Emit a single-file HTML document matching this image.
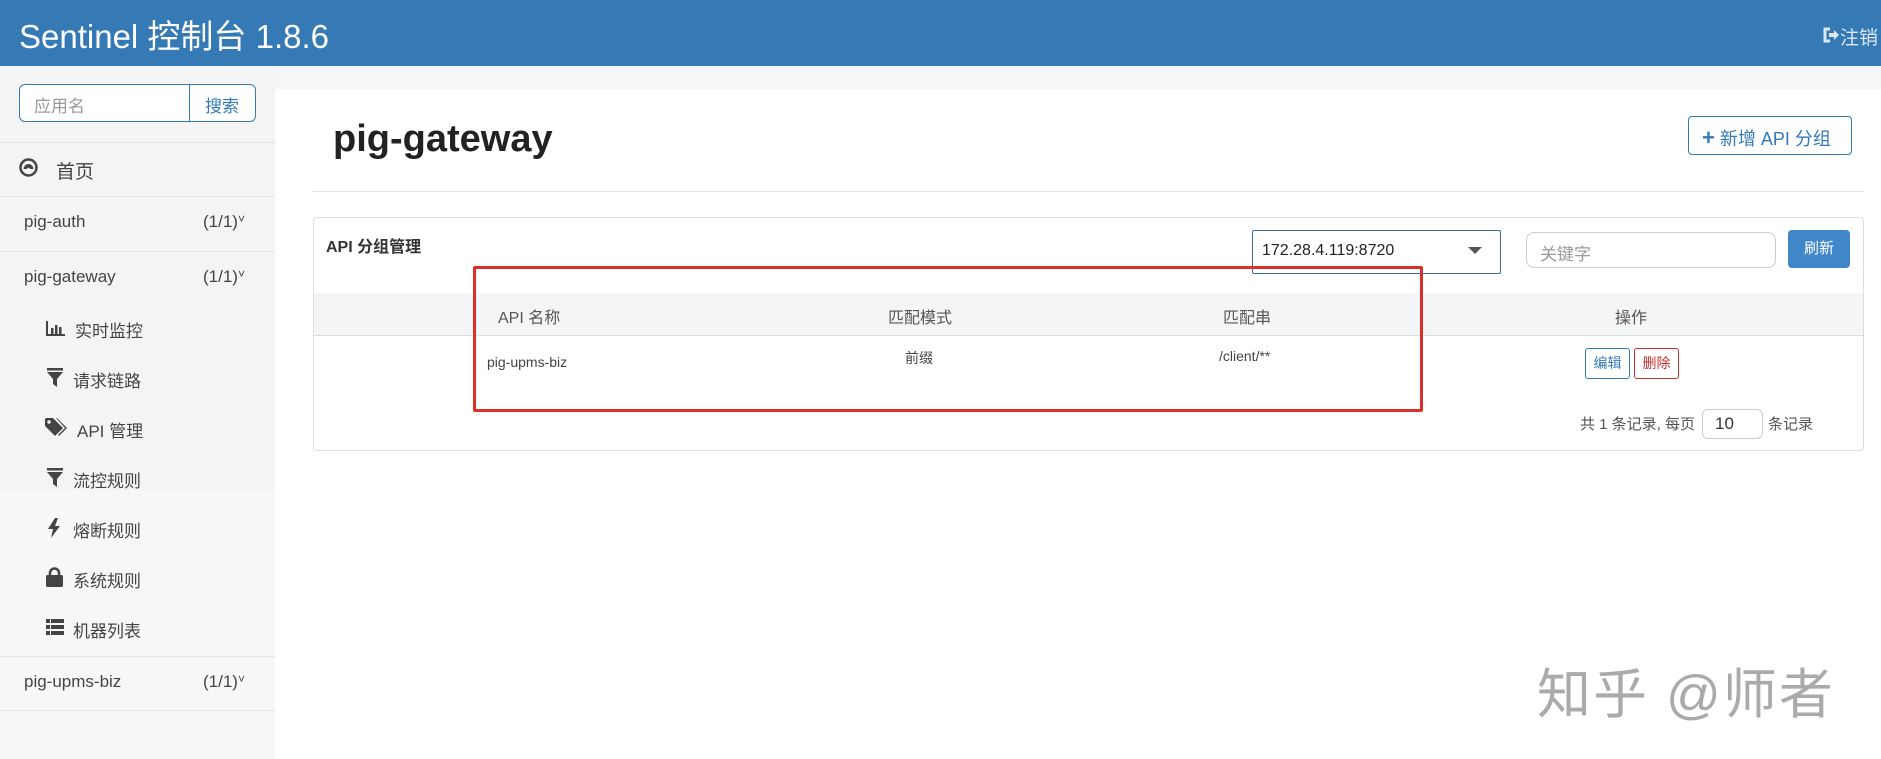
<!DOCTYPE html>
<html><head><meta charset="utf-8">
<style>
*{box-sizing:border-box;margin:0;padding:0}
body{width:1881px;height:759px;overflow:hidden;background:#f5f6f6;font-family:"Liberation Sans","Noto Sans CJK SC",sans-serif;color:#333;position:relative}
.a{position:absolute;white-space:nowrap}
#hdr{left:0;top:0;width:1881px;height:66px;background:#3579b5}
#side{left:0;top:66px;width:275px;height:693px;background:#f4f4f4}
#sidel{left:0;top:490px;width:275px;height:269px;background:#f7f7f7}
#main{left:275px;top:89px;width:1606px;height:670px;background:#fff}
.hl{height:1px;background:#e4e4e4;left:0;width:275px}
.si{font-size:17px;color:#444}
.sub{font-size:17px;color:#444}
.ic{fill:#444}
</style></head><body>
<div class="a" id="hdr"></div>
<div class="a" style="left:19px;top:10px;font-size:33px;color:#fff">Sentinel 控制台 1.8.6</div>
<svg class="a" style="left:1822px;top:27px" width="17" height="16" viewBox="0 0 17 16"><path d="M8 2H3v12h5" fill="none" stroke="#dce8f4" stroke-width="3"/><path d="M7 6h5V3l5 5-5 5v-3H7z" fill="#dce8f4"/></svg>
<div class="a" style="left:1840px;top:23px;font-size:19px;color:#dce8f4">注销</div>

<div class="a" id="side"></div>
<div class="a" id="sidel"></div>
<div class="a" style="left:19px;top:84px;width:237px;height:38px;border:1px solid #3579b5;border-radius:6px;background:#fff"></div>
<div class="a" style="left:189px;top:84px;width:1px;height:38px;background:#3579b5"></div>
<div class="a" style="left:34px;top:92px;font-size:17px;color:#999">应用名</div>
<div class="a" style="left:205px;top:92px;font-size:17px;color:#3579b5">搜索</div>
<div class="a hl" style="top:142px"></div>
<svg class="a" style="left:19px;top:158px" width="19" height="19" viewBox="0 0 19 19"><circle cx="9.5" cy="9.5" r="8" fill="none" stroke="#444" stroke-width="2.5"/><path d="M4.5 11a5 5 0 0 1 10 0z" fill="#444"/><circle cx="9.5" cy="11" r="1.3" fill="#fff"/></svg>
<div class="a si" style="left:56px;top:157px;font-size:19px">首页</div>
<div class="a hl" style="top:196px"></div>
<div class="a si" style="left:24px;top:212px">pig-auth</div>
<div class="a si" style="left:203px;top:212px">(1/1)<span style="font-size:12px;vertical-align:top">˅</span></div>
<div class="a hl" style="top:251px"></div>
<div class="a si" style="left:24px;top:267px">pig-gateway</div>
<div class="a si" style="left:203px;top:267px">(1/1)<span style="font-size:12px;vertical-align:top">˅</span></div>
<svg class="a" style="left:46px;top:320px" width="20" height="16" viewBox="0 0 20 16"><path d="M1 1v14h18" fill="none" stroke="#444" stroke-width="2"/><rect x="5" y="8" width="2.5" height="6" class="ic"/><rect x="9" y="5" width="2.5" height="9" class="ic"/><rect x="13" y="7" width="2.5" height="7" class="ic"/></svg>
<div class="a sub" style="left:75px;top:317px">实时监控</div>
<svg class="a" style="left:47px;top:368px" width="16" height="20" viewBox="0 0 16 20"><rect x="0" y="0" width="16" height="2.5" class="ic"/><path d="M0 4h16l-6 7v8l-4-3v-5z" class="ic"/></svg>
<div class="a sub" style="left:73px;top:367px">请求链路</div>
<svg class="a" style="left:45px;top:418px" width="24" height="20" viewBox="0 0 24 20"><path d="M0 1v7l10 10 8-8L8 0H1z" class="ic"/><circle cx="4" cy="4" r="1.7" fill="#f4f4f4"/><path d="M12 0l10 10-8 8-1-1 7-7-9-10z" class="ic"/></svg>
<div class="a sub" style="left:77px;top:417px">API 管理</div>
<svg class="a" style="left:47px;top:468px" width="16" height="20" viewBox="0 0 16 20"><rect x="0" y="0" width="16" height="2.5" class="ic"/><path d="M0 4h16l-6 7v8l-4-3v-5z" class="ic"/></svg>
<div class="a sub" style="left:73px;top:467px">流控规则</div>
<svg class="a" style="left:47px;top:518px" width="14" height="20" viewBox="0 0 14 20"><path d="M8 0L1 11h5l-2 9 9-12H8l3-8z" class="ic"/></svg>
<div class="a sub" style="left:73px;top:517px">熔断规则</div>
<svg class="a" style="left:46px;top:567px" width="17" height="20" viewBox="0 0 17 20"><path d="M4 9V6a4.5 4.5 0 0 1 9 0v3" fill="none" stroke="#444" stroke-width="2.5"/><rect x="0" y="8" width="17" height="12" rx="1.5" class="ic"/></svg>
<div class="a sub" style="left:73px;top:567px">系统规则</div>
<svg class="a" style="left:46px;top:619px" width="18" height="16" viewBox="0 0 18 16"><rect x="0" y="0" width="4" height="4" class="ic"/><rect x="5" y="0" width="13" height="4" class="ic"/><rect x="0" y="6" width="4" height="4" class="ic"/><rect x="5" y="6" width="13" height="4" class="ic"/><rect x="0" y="12" width="4" height="4" class="ic"/><rect x="5" y="12" width="13" height="4" class="ic"/></svg>
<div class="a sub" style="left:73px;top:617px">机器列表</div>
<div class="a hl" style="top:656px"></div>
<div class="a si" style="left:24px;top:672px">pig-upms-biz</div>
<div class="a si" style="left:203px;top:672px">(1/1)<span style="font-size:12px;vertical-align:top">˅</span></div>
<div class="a hl" style="top:710px"></div>

<div class="a" id="main"></div>
<div class="a" style="left:333px;top:118px;font-size:38px;font-weight:bold;color:#222">pig-gateway</div>
<div class="a" style="left:313px;top:191px;width:1551px;height:1px;background:#e4e4e4"></div>
<div class="a" style="left:1688px;top:116px;width:164px;height:39px;border:1px solid #3579b5;border-radius:4px"></div>
<div class="a" style="left:1702px;top:125px;font-size:18px;color:#3579b5"><b style="font-size:22px;line-height:18px">+</b> 新增 API 分组</div>

<div class="a" style="left:313px;top:217px;width:1551px;height:234px;border:1px solid #ddd;border-radius:4px;background:#fff"></div>
<div class="a" style="left:326px;top:233px;font-size:16px;font-weight:bold;color:#333">API 分组管理</div>
<div class="a" style="left:1252px;top:230px;width:249px;height:44px;border:1px solid #3a6a96;border-radius:2px;background:#fff"></div>
<div class="a" style="left:1262px;top:242px;font-size:16px;color:#222">172.28.4.119:8720</div>
<div class="a" style="left:1468px;top:247px;width:0;height:0;border-left:7px solid transparent;border-right:7px solid transparent;border-top:7px solid #555"></div>
<div class="a" style="left:1526px;top:232px;width:250px;height:36px;border:1px solid #ccc;border-radius:8px"></div>
<div class="a" style="left:1540px;top:240px;font-size:17px;color:#999">关键字</div>
<div class="a" style="left:1788px;top:230px;width:62px;height:38px;background:#3f87c8;border-radius:4px;color:#fff;font-size:15px;text-align:center;line-height:38px">刷新</div>

<div class="a" style="left:314px;top:293px;width:1549px;height:43px;background:#f4f5f6;border-bottom:1px solid #ddd"></div>
<div class="a" style="left:498px;top:304px;font-size:16px;color:#555">API 名称</div>
<div class="a" style="left:888px;top:304px;font-size:16px;color:#555">匹配模式</div>
<div class="a" style="left:1223px;top:304px;font-size:16px;color:#555">匹配串</div>
<div class="a" style="left:1615px;top:304px;font-size:16px;color:#555">操作</div>
<div class="a" style="left:487px;top:354px;font-size:14px;color:#444">pig-upms-biz</div>
<div class="a" style="left:905px;top:348px;font-size:14px;color:#444">前缀</div>
<div class="a" style="left:1219px;top:348px;font-size:14px;color:#444">/client/**</div>
<div class="a" style="left:1585px;top:348px;width:45px;height:31px;border:1px solid #3579b5;border-radius:3px;color:#3579b5;font-size:14px;text-align:center;line-height:29px">编辑</div>
<div class="a" style="left:1634px;top:348px;width:45px;height:31px;border:1px solid #c9302c;border-radius:3px;color:#c9302c;font-size:14px;text-align:center;line-height:29px">删除</div>
<div class="a" style="left:1580px;top:413px;font-size:15px;color:#555">共 1 条记录, 每页</div>
<div class="a" style="left:1702px;top:409px;width:61px;height:30px;border:1px solid #ccc;border-radius:6px;font-size:17px;line-height:28px;padding-left:12px">10</div>
<div class="a" style="left:1768px;top:413px;font-size:15px;color:#555">条记录</div>

<div class="a" style="left:473px;top:266px;width:950px;height:146px;border:3px solid #d9302a;border-radius:2px"></div>
<div class="a" style="left:1537px;top:650px;font-size:54px;color:#aaa;letter-spacing:2px">知乎 @师者</div>
</body></html>
